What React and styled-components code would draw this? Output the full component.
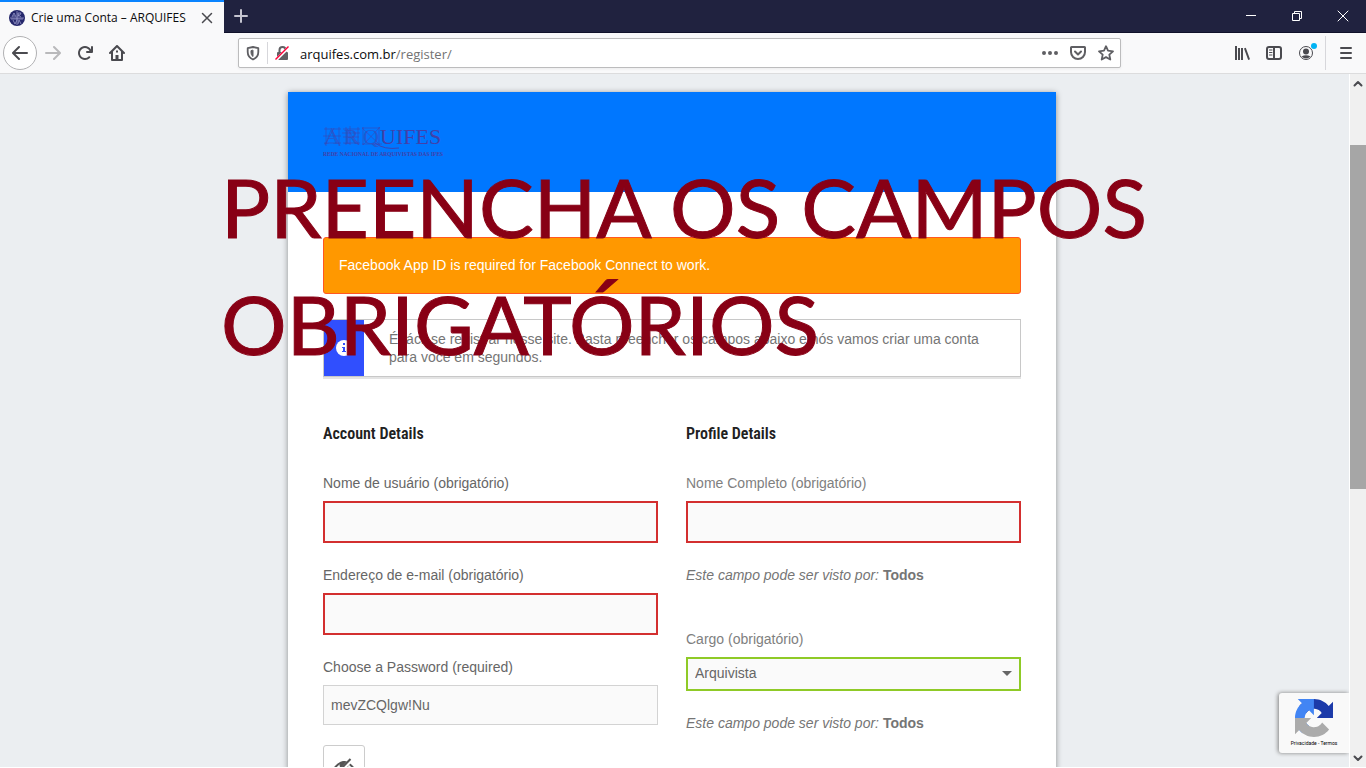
import React, { useState } from 'react';
import styled, { createGlobalStyle } from 'styled-components';

const GlobalStyle = createGlobalStyle`
  * {
    box-sizing: border-box;
  }

  body {
    margin: 0;
    overflow: hidden;
    font-family: "Liberation Sans", Arial, sans-serif;
    font-size: 14px;
  }

  button,
  input,
  select {
    font: inherit;
    color: inherit;
  }
`;

const Window = styled.div`
  display: flex;
  flex-direction: column;
  height: 100vh;
  border-bottom: 1px solid #fff;
  background-color: #fff;
`;

// Tab strip
const TabStrip = styled.header`
  display: flex;
  align-items: stretch;
  flex: none;
  height: 33px;
  background-color: #20223f;
  border-bottom: 1px solid #10112a;
  color: #fff;
`;

const Tab = styled.div`
  display: flex;
  align-items: center;
  width: 224px;
  height: 33px;
  padding: 0 8px 0 9px;
  border-top: 2px solid #0a84ff;
  background-color: #f9f9fa;
  color: #0c0c0d;
  font-family: "Open Sans", "Noto Sans", sans-serif;
  font-size: 12px;
`;

const TabTitle = styled.span`
  flex: 1;
  margin-left: 6px;
  white-space: nowrap;
`;

const IconButton = styled.button`
  display: flex;
  align-items: center;
  justify-content: center;
  flex: none;
  width: ${(props) => props.$width || 32}px;
  height: 32px;
  padding: 0;
  border: none;
  background: transparent;
  color: ${(props) => props.$color || '#4a4a4f'};
`;

const WindowButtons = styled.div`
  display: flex;
  margin-left: auto;
`;

// Navigation toolbar
const Toolbar = styled.nav`
  display: flex;
  align-items: center;
  flex: none;
  height: 41px;
  padding-left: 3px;
  background-color: #f9f9fa;
  border-bottom: 1px solid #dcdcdd;
`;

const BackButton = styled(IconButton)`
  width: 34px;
  height: 34px;
  border: 1px solid #b1b1b3;
  border-radius: 50%;
  background-color: #fff;
`;

const AddressBar = styled.div`
  display: flex;
  align-items: center;
  flex: 1;
  height: 30px;
  margin: 0 105px;
  border: 1px solid #bcbcbd;
  border-radius: 2px;
  background-color: #fff;
  box-shadow: 0 1px 3px rgba(0, 0, 0, 0.06);
`;

const AddressText = styled.div`
  flex: 1;
  margin-left: 4px;
  padding-top: 2px;
  color: #0c0c0d;
  font-family: "Open Sans", "Noto Sans", sans-serif;
  font-size: 13px;

  span {
    color: #737373;
  }
`;

const Divider = styled.span`
  width: 1px;
  height: ${(props) => props.$height}px;
  margin-left: ${(props) => props.$space || 0}px;
  background-color: #d7d7db;
`;

const AccountButton = styled(IconButton)`
  position: relative;

  &::after {
    content: '';
    position: absolute;
    top: 6px;
    right: 5px;
    width: 6px;
    height: 6px;
    border-radius: 50%;
    background-color: #00b3f4;
  }
`;

// Page viewport and scrollbar
const Viewport = styled.div`
  display: flex;
  position: relative;
  flex: 1;
  min-height: 0;
`;

const Page = styled.main`
  position: relative;
  flex: 1;
  padding: 18px 5px 0 0;
  overflow: hidden;
  background-color: #ebeef1;
`;

const Scrollbar = styled.div`
  display: flex;
  flex-direction: column;
  align-items: center;
  justify-content: space-between;
  width: 17px;
  border-left: 1px solid #fff;
  background-color: #f0f0f0;
`;

const Track = styled.div`
  flex: 1;
  align-self: stretch;
  padding-top: 52px;
`;

const Thumb = styled.div`
  height: 57%;
  background-color: #a6a6a6;
`;

const ScrollArrow = styled(IconButton)`
  width: 16px;
  height: 19px;
`;

// Registration card
const Card = styled.section`
  max-width: 768px;
  min-height: 900px;
  margin: 0 auto;
  background-color: #fff;
  box-shadow: 0 1px 6px rgba(0, 0, 0, 0.4);
`;

const CardHeader = styled.div`
  height: 100px;
  padding: 33px 35px;
  background-color: #0077ff;
`;

const CardBody = styled.div`
  padding: 45px 35px;
  color: #757575;
`;

const Alert = styled.div`
  padding: 19px 15px 20px;
  border: 1px solid #ff5722;
  border-radius: 3px;
  background-color: #ff9800;
  color: #fff;
  line-height: 16px;
`;

const Notice = styled.div`
  display: flex;
  margin-top: 25px;
  border: 1px solid #c8c8c8;
  box-shadow: 0 2px 0 #e4e4e4;

  p {
    margin: 0;
    padding: 10px 40px 10px 25px;
    line-height: 18px;
  }
`;

const NoticeIcon = styled.div`
  display: flex;
  align-items: center;
  justify-content: center;
  flex: none;
  width: 40px;
  background-color: #304ffe;
`;

const Columns = styled.form`
  display: grid;
  grid-template-columns: 1fr 1fr;
  gap: 28px;
  margin-top: 45px;
`;

const Title = styled.h4`
  margin: 0 0 28px;
  color: #212121;
  font-family: "Roboto Condensed", "Liberation Sans Narrow", "Liberation Sans", sans-serif;
  font-size: 16px;
  font-weight: 600;
  line-height: 24px;
`;

const Field = styled.div`
  margin-bottom: ${(props) => props.$gap || 23}px;
`;

const Label = styled.label`
  display: block;
  margin-bottom: 9px;
  color: ${(props) => (props.$light ? '#808080' : '#666')};
  line-height: 18px;
`;

const TextInput = styled.input`
  display: block;
  width: 100%;
  height: ${(props) => (props.$invalid ? 42 : 40)}px;
  padding: 0 7px;
  border: ${(props) => (props.$invalid ? '2px solid #d32f2f' : '1px solid #d3d3d3')};
  border-radius: 0;
  background-color: #fafafa;
  color: #666;
  outline: none;
`;

const SelectWrap = styled.div`
  position: relative;

  &::after {
    content: '';
    position: absolute;
    top: 14px;
    right: 9px;
    border: 5px solid transparent;
    border-top-color: #666;
    border-bottom: none;
    pointer-events: none;
  }
`;

const Select = styled.select`
  display: block;
  width: 100%;
  height: 34px;
  padding: 0 7px 2px;
  border: 2px solid #8fca27;
  border-radius: 0;
  background-color: #fafafa;
  color: #666;
  appearance: none;
  outline: none;
`;

const Visibility = styled.p`
  margin: 23px 0 0;
  font-style: italic;
  line-height: 18px;

  strong {
    font-style: normal;
  }
`;

const RevealButton = styled.button`
  display: flex;
  justify-content: center;
  width: 42px;
  height: 42px;
  margin-top: -3px;
  padding-top: 10px;
  border: 1px solid #ccc;
  border-radius: 3px;
  background-color: #fff;
`;

// Caption laid over the page
const Caption = styled.div`
  position: absolute;
  top: 74px;
  left: 221px;
  color: #880015;
  font-family: Lato, sans-serif;
  font-size: 82px;
  line-height: 117px;
  white-space: nowrap;
  -webkit-text-stroke: 1px #880015;
  pointer-events: none;
`;

const Recaptcha = styled.aside`
  position: absolute;
  right: 17px;
  bottom: 14px;
  display: flex;
  flex-direction: column;
  align-items: center;
  width: 70px;
  height: 60px;
  padding-top: 6px;
  border-radius: 3px 0 0 3px;
  background-color: #f9f9f9;
  box-shadow: -1px 0 4px #808080;
  clip-path: inset(-6px 0 -6px -6px);
  color: #000;
  font-family: Roboto, sans-serif;
  font-size: 5px;
  line-height: 12px;

  a {
    color: inherit;
    text-decoration: none;
  }
`;

const Favicon = () => (
  <svg width="16" height="16" viewBox="0 0 16 16">
    <circle cx="8" cy="8" r="8" fill="#25276b" />
    <path
      d="M3 7l2-4 2 4M4 6h2M9 3v4M9 3h3l-1 2H9l3 2M2 9h12M4 10l2 4 2-4M9 14l1-4 2 4M8 1v14M1 8h14"
      fill="none"
      stroke="#a9abd8"
      strokeWidth=".7"
    />
  </svg>
);

const Glyph = ({ d, size = 16 }) => (
  <svg width={size} height={size} viewBox="0 0 16 16" fill="currentColor">
    <path fillRule="evenodd" d={d} />
  </svg>
);

const Line = ({ d, size = 16, width = 2, cap = 'round', children }) => (
  <svg
    width={size}
    height={size}
    viewBox="0 0 16 16"
    fill="none"
    stroke="currentColor"
    strokeWidth={width}
    strokeLinecap={cap}
    strokeLinejoin="round"
  >
    <path d={d} />
    {children}
  </svg>
);

const icons = {
  back: 'M15 7H3.414l4.293-4.293a1 1 0 0 0-1.414-1.414l-6 6a1 1 0 0 0 0 1.414l6 6a1 1 0 0 0 1.414-1.414L3.414 9H15a1 1 0 0 0 0-2z',
  forward:
    'M15.707 7.293l-6-6a1 1 0 0 0-1.414 1.414L12.586 7H1a1 1 0 0 0 0 2h11.586l-4.293 4.293a1 1 0 1 0 1.414 1.414l6-6a1 1 0 0 0 0-1.414z',
  reload:
    'M15 1a1 1 0 0 0-1 1v2.418A6.995 6.995 0 1 0 8 15a6.954 6.954 0 0 0 4.95-2.05 1 1 0 0 0-1.414-1.414A5.019 5.019 0 1 1 12.549 6H10a1 1 0 0 0 0 2h5a1 1 0 0 0 1-1V2a1 1 0 0 0-1-1z',
  home: 'M15.707 7.293l-7-7a1 1 0 0 0-1.414 0l-7 7a1 1 0 0 0 1.414 1.414L2 8.414V15a1 1 0 0 0 1 1h10a1 1 0 0 0 1-1V8.414l.293.293a1 1 0 0 0 1.414-1.414zM12 14H9.500v-4h-3v4H4V6.414l4-4 4 4zM7 5.500h2v2H7z',
  library: 'M1 1h2v14H1zM4 3h2v12H4zM7 3h2v12H7zM10 3.500l1.800-.7 4.200 11.500-1.800.7z',
  menu: 'M3 2h10a1 1 0 0 1 0 2H3a1 1 0 0 1 0-2zM3 7h10a1 1 0 0 1 0 2H3a1 1 0 0 1 0-2zM3 12h10a1 1 0 0 1 0 2H3a1 1 0 0 1 0-2z',
  more: 'M2 6a2 2 0 1 1 0 4 2 2 0 0 1 0-4zM8 6a2 2 0 1 1 0 4 2 2 0 0 1 0-4zM14 6a2 2 0 1 1 0 4 2 2 0 0 1 0-4z',
};

const Logo = () => (
  <svg width="122" height="34" viewBox="0 0 122 34" role="img" aria-label="Arquifes">
    <g fill="#4340a8" fontFamily="Liberation Serif, serif">
      <text x="1" y="19" fontSize="22" opacity=".4">A</text>
      <text x="21" y="19" fontSize="22" opacity=".5">R</text>
      <text x="40" y="19" fontSize="22" opacity=".5">Q</text>
      <text x="57" y="19" fontSize="22">UIFES</text>
      <text x="0" y="31" fontSize="5.5" fontWeight="700">REDE NACIONAL DE ARQUIVISTAS DAS IFES</text>
    </g>
    <g fill="none" stroke="#3a46b4" strokeWidth=".6">
      <path d="M1 4h17M0 11h18M1 18h17M3 2v19M16 2v19M2 20L11 3M8 3l9 18" />
      <path d="M20 4h17M19 8h18M20 12h16M20 18h17M23 2v18M27 1v19M35 2v18M24 4l12 16" />
      <path d="M39 3h18M39 19h20M40 2v18M56 2v18M39 3l18 17M40 20L57 2" />
      <path d="M52 18q9 7 24 5" strokeWidth="1" />
    </g>
  </svg>
);

const RecaptchaLogo = () => (
  <svg width="38" height="38" viewBox="0 0 64 64">
    <path
      fill="#1c3aa9"
      d="M64 31.955l-.033-1.370V4.687l-7.160 7.160C50.948 4.674 42.033.093 32.050.093c-10.400 0-19.622 4.960-25.458 12.640l11.736 11.860a15.550 15.550 0 0 1 4.754-5.334c2.050-1.600 4.952-2.906 8.968-2.906.485 0 .860.057 1.135.163 4.976.393 9.288 3.140 11.828 7.124l-8.307 8.307L64 31.953"
    />
    <path
      fill="#4285f4"
      d="M31.862.094l-1.370.033H4.594l7.160 7.160C4.580 13.147 0 22.060 0 32.046c0 10.400 4.960 19.622 12.640 25.458L24.500 45.768a15.550 15.550 0 0 1-5.334-4.754c-1.600-2.050-2.906-4.952-2.906-8.968 0-.485.057-.860.163-1.135.393-4.976 3.140-9.288 7.124-11.828l8.307 8.307L31.860.095"
    />
    <path
      fill="#ababab"
      d="M.001 32.045l.033 1.370v25.898l7.160-7.160c5.860 7.173 14.774 11.754 24.760 11.754 10.400 0 19.622-4.960 25.458-12.640l-11.736-11.860a15.550 15.550 0 0 1-4.754 5.334c-2.050 1.600-4.952 2.906-8.968 2.906-.485 0-.860-.057-1.135-.163-4.976-.393-9.288-3.140-11.828-7.124l8.307-8.307c-10.522.040-22.400.066-27.295-.005"
    />
  </svg>
);

const Browser = () => (
  <>
    <TabStrip>
      <Tab>
        <Favicon />
        <TabTitle>Crie uma Conta – ARQUIFES</TabTitle>
        <IconButton $width={18} aria-label="Fechar aba">
          <Line d="M3.500 3.500l9 9M12.500 3.500l-9 9" width={1.5} />
        </IconButton>
      </Tab>
      <IconButton $width={34} $color="#c5c5d0" aria-label="Nova aba">
        <Line d="M8 2v12M2 8h12" width={2} />
      </IconButton>
      <WindowButtons>
        <IconButton $width={46} $color="#fff" aria-label="Minimizar">
          <Line d="M3 7.500h10" width={1} cap="butt" />
        </IconButton>
        <IconButton $width={46} $color="#fff" aria-label="Restaurar">
          <Line d="M3.500 5.500h7v7h-7zM5.500 5.500v-2h7v7h-2" width={1} cap="butt" />
        </IconButton>
        <IconButton $width={46} $color="#fff" aria-label="Fechar">
          <Line d="M3 3l10 10M13 3L3 13" width={1} />
        </IconButton>
      </WindowButtons>
    </TabStrip>

    <Toolbar>
      <BackButton aria-label="Voltar">
        <Glyph d={icons.back} />
      </BackButton>
      <IconButton $color="#b9b9bb" aria-label="Avançar">
        <Glyph d={icons.forward} />
      </IconButton>
      <IconButton aria-label="Recarregar">
        <Glyph d={icons.reload} />
      </IconButton>
      <IconButton aria-label="Início">
        <Glyph d={icons.home} />
      </IconButton>

      <AddressBar>
        <IconButton $width={28} $color="#5f5f63" aria-label="Proteção">
          <Line d="M8 2L2.700 3.200v3.800c0 4 2 6 5.300 7.500 3.300-1.500 5.300-3.500 5.300-7.500V3.200z" width={1.8}>
            <path d="M8 5.500v6C6.500 10.500 6 9 6 7V6z" fill="currentColor" strokeWidth="1" />
          </Line>
        </IconButton>
        <Divider $height={22} />
        <IconButton $width={28} $color="#5f5f63" aria-label="Conexão não segura">
          <svg width="16" height="16" viewBox="0 0 16 16" fill="none">
            <rect x="3" y="7" width="11" height="8" rx="1" fill="currentColor" />
            <path d="M5.500 7V5a3 3 0 0 1 6 0v2" stroke="currentColor" strokeWidth="2" />
            <path d="M2 15L15 2" stroke="#fff" strokeWidth="3" />
            <path d="M1.500 14.500l13-13" stroke="#ff0039" strokeWidth="1.500" />
          </svg>
        </IconButton>
        <AddressText>
          arquifes.com.br<span>/register/</span>
        </AddressText>
        <IconButton $width={28} $color="#5f5f63" aria-label="Ações da página">
          <Glyph d={icons.more} />
        </IconButton>
        <IconButton $width={28} $color="#5f5f63" aria-label="Salvar no Pocket">
          <Line d="M1.500 2h13a.5.5 0 0 1 .5.5V7A7 7 0 0 1 1 7V2.500a.5.5 0 0 1 .5-.5zM5 6.500l3 3 3-3" />
        </IconButton>
        <IconButton $width={28} $color="#5f5f63" aria-label="Favoritar">
          <Line
            d="M8 1.200l2 4.500 5 .6-3.700 3.300 1 4.900L8 12.100l-4.300 2.400 1-4.900L1 6.300l5-.6z"
            width={1.8}
          />
        </IconButton>
      </AddressBar>

      <IconButton aria-label="Biblioteca">
        <Glyph d={icons.library} />
      </IconButton>
      <IconButton aria-label="Painel lateral">
        <Line d="M3 2h10a2 2 0 0 1 2 2v8a2 2 0 0 1-2 2H3a2 2 0 0 1-2-2V4a2 2 0 0 1 2-2zM8 2v12">
          <path d="M3.500 5H6M3.500 7.500H6M3.500 10H6" strokeWidth="1" />
        </Line>
      </IconButton>
      <AccountButton aria-label="Conta">
        <svg width="16" height="16" viewBox="0 0 16 16" fill="none">
          <circle cx="8" cy="8" r="6.500" stroke="currentColor" />
          <circle cx="8" cy="6.500" r="3" fill="currentColor" />
          <path d="M3.500 11.500q4.500-2.500 9 0Q8 15.500 3.500 11.500z" fill="currentColor" />
        </svg>
      </AccountButton>
      <Divider $height={34} $space={3} />
      <IconButton $width={40} aria-label="Menu">
        <Glyph d={icons.menu} />
      </IconButton>
    </Toolbar>
  </>
);

const RegisterForm = () => {
  const [password, setPassword] = useState('mevZCQlgw!Nu');

  return (
    <Columns>
      <div>
        <Title>Account Details</Title>
        <Field>
          <Label htmlFor="username">Nome de usuário (obrigatório)</Label>
          <TextInput id="username" $invalid />
        </Field>
        <Field>
          <Label htmlFor="email">Endereço de e-mail (obrigatório)</Label>
          <TextInput id="email" type="email" $invalid />
        </Field>
        <Field>
          <Label htmlFor="password">Choose a Password (required)</Label>
          <TextInput id="password" value={password} onChange={(e) => setPassword(e.target.value)} />
        </Field>
        <RevealButton type="button" aria-label="Ocultar senha">
          <svg width="20" height="20" viewBox="0 0 20 20" fill="none" stroke="#555">
            <path d="M1.500 11Q10 1 18.500 11 10 19 1.500 11z" strokeWidth="2" />
            <circle cx="10" cy="9.500" r="4" fill="#555" />
            <path d="M4 18L17 4" stroke="#fff" strokeWidth="4" />
            <path d="M3 17L16.500 3" strokeWidth="2" />
          </svg>
        </RevealButton>
      </div>

      <div>
        <Title>Profile Details</Title>
        <Field $gap={46}>
          <Label htmlFor="fullname" $light>Nome Completo (obrigatório)</Label>
          <TextInput id="fullname" $invalid />
          <Visibility>
            Este campo pode ser visto por: <strong>Todos</strong>
          </Visibility>
        </Field>
        <Field>
          <Label htmlFor="role" $light>Cargo (obrigatório)</Label>
          <SelectWrap>
            <Select id="role" defaultValue="Arquivista">
              <option>Arquivista</option>
            </Select>
          </SelectWrap>
          <Visibility>
            Este campo pode ser visto por: <strong>Todos</strong>
          </Visibility>
        </Field>
      </div>
    </Columns>
  );
};

const App = () => (
  <>
    <GlobalStyle />
    <Window>
      <Browser />
      <Viewport>
        <Page>
          <Card>
            <CardHeader>
              <Logo />
            </CardHeader>
            <CardBody>
              <Alert>Facebook App ID is required for Facebook Connect to work.</Alert>
              <Notice>
                <NoticeIcon>
                  <svg width="16" height="16" viewBox="0 0 16 16">
                    <circle cx="8" cy="8" r="8" fill="#fff" />
                    <path d="M7 3h2v2H7zM6 7h3v4h1v1H6v-1h1V8H6z" fill="#304ffe" />
                  </svg>
                </NoticeIcon>
                <p>
                  É fácil se registrar nesse site. Basta preencher os campos abaixo e nós vamos criar
                  uma conta para você em segundos.
                </p>
              </Notice>
              <RegisterForm />
            </CardBody>
          </Card>
          <Caption>
            PREENCHA OS CAMPOS
            <br />
            OBRIGATÓRIOS
          </Caption>
        </Page>
        <Recaptcha>
          <RecaptchaLogo />
          <div>
            <a href="#privacidade">Privacidade</a> - <a href="#termos">Termos</a>
          </div>
        </Recaptcha>
        <Scrollbar>
          <ScrollArrow aria-label="Rolar para cima">
            <Line d="M4.500 9.500L8 6l3.500 3.500" />
          </ScrollArrow>
          <Track>
            <Thumb />
          </Track>
          <ScrollArrow aria-label="Rolar para baixo">
            <Line d="M4.500 6.500L8 10l3.500-3.500" />
          </ScrollArrow>
        </Scrollbar>
      </Viewport>
    </Window>
  </>
);

export default App;
